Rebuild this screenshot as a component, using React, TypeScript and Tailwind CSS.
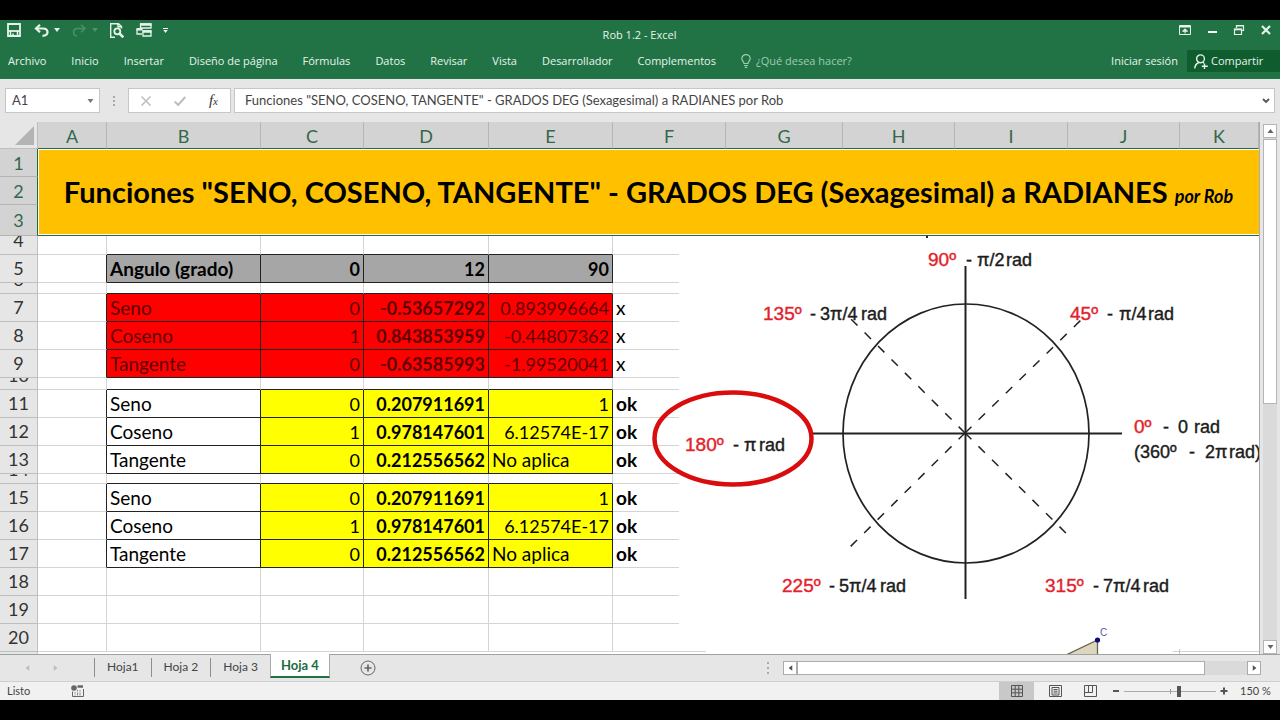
import type { ReactNode } from 'react';
import clsx from 'clsx';

type Kind = 'blank' | 'head' | 'bad' | 'good';

type Row = {
  n: number;
  kind: Kind;
  size?: 'row4' | 'thin' | 'thin10' | 'thin14';
  cells?: string[];
};

const columns = [
  { name: 'A', width: 'w-[69px]' },
  { name: 'B', width: 'w-[154px]' },
  { name: 'C', width: 'w-[103px]' },
  { name: 'D', width: 'w-[125px]' },
  { name: 'E', width: 'w-[124px]' },
  { name: 'F', width: 'w-[113px]' },
  { name: 'G', width: 'w-[117px]' },
  { name: 'H', width: 'w-[112px]' },
  { name: 'I', width: 'w-[113px]' },
  { name: 'J', width: 'w-[112px]' },
  { name: 'K', width: '' },
];

const rows: Row[] = [
  { n: 4, kind: 'blank', size: 'row4' },
  { n: 5, kind: 'head', cells: ['Angulo (grado)', '0', '12', '90', ''] },
  { n: 6, kind: 'blank', size: 'thin' },
  { n: 7, kind: 'bad', cells: ['Seno', '0', '-0.53657292', '0.893996664', 'x'] },
  { n: 8, kind: 'bad', cells: ['Coseno', '1', '0.843853959', '-0.44807362', 'x'] },
  { n: 9, kind: 'bad', cells: ['Tangente', '0', '-0.63585993', '-1.99520041', 'x'] },
  { n: 10, kind: 'blank', size: 'thin10' },
  { n: 11, kind: 'good', cells: ['Seno', '0', '0.207911691', '1', 'ok'] },
  { n: 12, kind: 'good', cells: ['Coseno', '1', '0.978147601', '6.12574E-17', 'ok'] },
  { n: 13, kind: 'good', cells: ['Tangente', '0', '0.212556562', 'No aplica', 'ok'] },
  { n: 14, kind: 'blank', size: 'thin14' },
  { n: 15, kind: 'good', cells: ['Seno', '0', '0.207911691', '1', 'ok'] },
  { n: 16, kind: 'good', cells: ['Coseno', '1', '0.978147601', '6.12574E-17', 'ok'] },
  { n: 17, kind: 'good', cells: ['Tangente', '0', '0.212556562', 'No aplica', 'ok'] },
  { n: 18, kind: 'blank' },
  { n: 19, kind: 'blank' },
  { n: 20, kind: 'blank' },
];

const heights = {
  row4: 'h-[19px]',
  thin: 'h-[11px]',
  thin10: 'h-[12px]',
  thin14: 'h-[10px]',
};

const innerHeights = {
  row4: 'h-[18px]',
  thin: 'h-[10px]',
  thin10: 'h-[11px]',
  thin14: 'h-[9px]',
};

const ribbonTabs = ['Inicio', 'Insertar', 'Diseño de página', 'Fórmulas', 'Datos', 'Revisar', 'Vista', 'Desarrollador', 'Complementos'];
const sheetTabs = ['Hoja1', 'Hoja 2', 'Hoja 3'];

function Caret({ className = 'h-[4px] w-[6px]' }: { className?: string }) {
  return (
    <svg viewBox="0 0 6 4" className={clsx('shrink-0', className)} fill="currentColor" aria-hidden="true">
      <path d="M0 0h6L3 4z" />
    </svg>
  );
}

function IconButton({ label, className, children }: { label: string; className?: string; children: ReactNode }) {
  return (
    <button type="button" aria-label={label} className={clsx('flex shrink-0 items-center justify-center', className)}>
      {children}
    </button>
  );
}

function TitleBar() {
  return (
    <div className="grid h-[30px] grid-cols-[1fr_auto_1fr] items-center pl-[7px] pr-2">
      <div className="flex h-5 items-center self-start">
        <IconButton label="Guardar" className="h-5 w-[14px]">
          <svg viewBox="0 0 14 14" className="size-[14px]" fill="none" stroke="currentColor" strokeWidth="1.8">
            <path d="M1 1h12v12H1z" />
            <path d="M1 8h12" />
            <path d="M3.500 8v5M10.500 8v5M6 10.500v2.500" strokeWidth="1.500" />
          </svg>
        </IconButton>
        <IconButton label="Deshacer" className="ml-[13px] h-5 w-[26px] gap-[5px]">
          <svg viewBox="0 0 15 13" className="h-[13px] w-[15px]" fill="none" stroke="currentColor" strokeWidth="2.200">
            <path d="M6 .8 2 4.5l4 3.8" />
            <path d="M2.4 4.5H9c3 0 4.500 1.500 4.500 3.600S12 11.800 8.500 11.800" />
          </svg>
          <Caret />
        </IconButton>
        <IconButton label="Rehacer" className="ml-3 h-5 w-[26px] gap-[5px] text-[#4d9069]">
          <svg viewBox="0 0 15 13" className="h-[13px] w-[15px]" fill="none" stroke="currentColor" strokeWidth="1.5">
            <path d="m9 .8 4 3.700-4 3.800" />
            <path d="M12.600 4.500H6C3 4.500 1.500 6 1.500 8.100S3 11.800 5 11.800" />
          </svg>
          <Caret />
        </IconButton>
        <IconButton label="Vista previa" className="ml-3 h-5 w-[14px]">
          <svg viewBox="0 0 14 15" className="h-[15px] w-[14px]" fill="none" stroke="currentColor" strokeWidth="1.4">
            <path d="M5 14.200H.700V.700h7.800L11.500 3.500v2M8 .800v3h3" />
            <circle cx="7.300" cy="8.300" r="3" strokeWidth="1.800" />
            <path d="m9.500 10.500 3.800 3.800" strokeWidth="2.600" />
          </svg>
        </IconButton>
        <IconButton label="Cambiar ventanas" className="ml-3 h-5 w-4">
          <svg viewBox="0 0 16 14" className="h-[14px] w-4" fill="none" stroke="currentColor" strokeWidth="1.3">
            <path d="M4.500 1h10.500v4H4.500zM1 6v5h5M7 8h8v5H7z" />
            <path d="M4 1.500h11.500M.500 6.200h6M6.500 8.500h9" strokeWidth="2.600" />
          </svg>
        </IconButton>
        <IconButton label="Personalizar barra" className="ml-[10px] h-5 w-[6px] flex-col gap-px">
          <span className="h-px w-[5px] bg-white" />
          <Caret className="h-[3px] w-[5px]" />
        </IconButton>
      </div>
      <h1 className="text-[11px] leading-4">Rob 1.2 - Excel</h1>
      <div className="flex h-5 items-center justify-end gap-[15px] self-start">
        <IconButton label="Opciones de la cinta" className="h-5 w-3">
          <svg viewBox="0 0 12 10" className="h-[10px] w-3" fill="none" stroke="currentColor">
            <path d="M.5.5h11v9H.5z" />
            <path d="M1 1.500h10" strokeWidth="2" />
            <path d="M6 8.500V4.500M3.500 6.200h5L6 3.800z" fill="currentColor" />
          </svg>
        </IconButton>
        <IconButton label="Minimizar" className="h-5 w-3">
          <span className="mt-1 h-[2px] w-[9px] bg-white" />
        </IconButton>
        <IconButton label="Restaurar" className="h-5 w-3">
          <svg viewBox="0 0 12 10" className="h-[10px] w-3" fill="none" stroke="currentColor">
            <path d="M3.500 3V.500h7v5H9M3.500 1h7M1.500 4h7v5.500h-7z" strokeWidth="1.200" />
            <path d="M1.500 4.500h7" strokeWidth="1.600" />
          </svg>
        </IconButton>
        <IconButton label="Cerrar" className="h-5 w-3">
          <svg viewBox="0 0 10 10" className="size-[10px]" stroke="currentColor" strokeWidth="2.200">
            <path d="m1 1 8 8M9 1 1 9" />
          </svg>
        </IconButton>
      </div>
    </div>
  );
}

function Ribbon() {
  return (
    <nav className="flex h-[29px] items-start text-[11px] leading-[22px] whitespace-nowrap">
      <button type="button" className="ml-2">Archivo</button>
      <div className="ml-[25px] flex gap-[25px]">
        {ribbonTabs.map((tab) => (
          <button type="button" key={tab}>{tab}</button>
        ))}
      </div>
      <label className="ml-[25px] flex h-[22px] items-center gap-[5px] text-[#9fcbb0]">
        <svg viewBox="0 0 10 14" className="h-[14px] w-[10px]" fill="none" stroke="currentColor" strokeWidth="1.200">
          <path d="M3 9.500C3 7.500.8 7 .8 4.600a4.200 4 0 0 1 8.400 0C9.200 7 7 7.500 7 9.500zM3 11.500h4M3.800 13.300h2.400" />
        </svg>
        <input
          type="text"
          aria-label="¿Qué desea hacer?"
          placeholder="¿Qué desea hacer?"
          className="w-[110px] bg-transparent outline-none placeholder:text-[#9fcbb0]"
        />
      </label>
      <button type="button" className="ml-auto">Iniciar sesión</button>
      <button type="button" className="ml-[9px] flex h-[22px] w-[93px] items-center gap-[3px] bg-[#0f5c2f] pl-[7px]">
        <svg viewBox="0 0 14 15" className="h-[15px] w-[14px]" fill="none" stroke="currentColor" strokeWidth="1.400">
          <circle cx="6.500" cy="4.800" r="3.900" />
          <path d="M.700 14.500C1 11.500 2.500 9.300 5 8.500M8.500 8l1.500 1.200M10.500 9.500v5.500M7.800 12.200h6" />
        </svg>
        Compartir
      </button>
    </nav>
  );
}

function FormulaBar() {
  return (
    <div className="flex h-[43px] items-start bg-[#e6e6e6] pt-[9px] pr-[5px] pl-[5px] text-[13px] text-[#444]">
      <label className="flex h-[25px] w-[95px] items-center border border-[#c6c6c6] bg-white pr-[5px] pl-[6px]">
        <input aria-label="Cuadro de nombres" defaultValue="A1" className="min-w-0 flex-1 outline-none" />
        <Caret className="h-[4px] w-[7px] text-[#777]" />
      </label>
      <span className="flex h-[25px] w-7 flex-col items-center justify-center gap-[2px]">
        <i className="size-[2px] bg-[#aaa]" />
        <i className="size-[2px] bg-[#aaa]" />
        <i className="size-[2px] bg-[#aaa]" />
      </span>
      <div className="flex h-[25px] w-[103px] items-center justify-between border border-[#c6c6c6] bg-white pr-3 pl-3">
        <IconButton label="Cancelar">
          <svg viewBox="0 0 10 10" className="size-[10px]" stroke="#bdbdbd" strokeWidth="1.500">
            <path d="m.500.500 9 9M9.500.500l-9 9" />
          </svg>
        </IconButton>
        <IconButton label="Introducir">
          <svg viewBox="0 0 12 10" className="h-[10px] w-3" stroke="#bdbdbd" strokeWidth="2" fill="none">
            <path d="m.700 5.500 3.500 3.500 7-8" />
          </svg>
        </IconButton>
        <button type="button" aria-label="Insertar función" className="font-['Liberation_Serif',serif] text-[15px] leading-5 text-[#333] italic">
          f<span className="text-[11px]">x</span>
        </button>
      </div>
      <label className="ml-[3px] flex h-[25px] min-w-0 flex-1 items-center border border-[#c6c6c6] bg-white pr-1 pl-[10px]">
        <input
          aria-label="Barra de fórmulas"
          defaultValue={'Funciones "SENO, COSENO, TANGENTE" - GRADOS DEG (Sexagesimal) a RADIANES por Rob'}
          className="min-w-0 flex-1 outline-none"
        />
        <svg viewBox="0 0 8 6" className="h-[6px] w-2" fill="none" stroke="#555" strokeWidth="1.800">
          <path d="m1 1 3 3 3-3" />
        </svg>
      </label>
    </div>
  );
}

const fills = {
  blank: '',
  head: 'bg-[#a6a6a6] font-bold',
  bad: 'bg-[#ff0000] text-[#5e0000]',
  good: 'bg-[#ffff00]',
};

function DataRow({ row, next }: { row: Row; next?: Row }) {
  const filled = row.kind !== 'blank';
  const opensBlock = !filled && next !== undefined && next.kind !== 'blank';

  return (
    <tr className={row.size ? heights[row.size] : 'h-[28px]'}>
      <th scope="row" className="border-r border-b border-[#bfbfbf] bg-[#e6e6e6] p-0 font-normal text-[#333]">
        <div className={clsx('flex items-end justify-center overflow-hidden', row.size ? innerHeights[row.size] : 'h-[27px]')}>
          <span className="mb-1 leading-5">{row.n}</span>
        </div>
      </th>
      {columns.map((col, i) => {
        const inBlock = i >= 1 && i <= 4;
        const text = row.cells?.[i - 1] ?? '';
        const left = i === 1 || i === 5 || text === 'No aplica';
        return (
          <td
            key={col.name}
            className={clsx(
              'border-r border-b p-0 px-[3px] whitespace-nowrap',
              row.size ? 'leading-none' : 'leading-5',
              left ? 'text-left text-[19px]' : 'text-right',
              filled && i <= 4 ? 'border-r-[#222]' : 'border-r-[#d4d4d4]',
              inBlock && (filled || opensBlock) ? 'border-b-[#222]' : 'border-b-[#d4d4d4]',
              inBlock && !(row.kind === 'good' && i === 1) && fills[row.kind],
              (i === 3 || (i === 5 && row.kind === 'good')) && 'font-bold',
            )}
          >
            {text}
          </td>
        );
      })}
    </tr>
  );
}

// Coordinates are those of the sheet, so the figure keeps its place over the cells.
function CircleFigure() {
  const labels = [
    { x: 928, y: 266, deg: '90º', parts: [[966, '-'], [977, 'π/2'], [1006, 'rad']] },
    { x: 763, y: 320, deg: '135º', parts: [[810, '-'], [820, '3π/4'], [861, 'rad']] },
    { x: 1070, y: 320, deg: '45º', parts: [[1107, '-'], [1119, 'π/4'], [1148, 'rad']] },
    { x: 685, y: 451, deg: '180º', parts: [[733, '-'], [744, 'π'], [759, 'rad']] },
    { x: 1134, y: 433, deg: '0º', parts: [[1163, '-'], [1178, '0'], [1194, 'rad']] },
    { x: 1134, y: 458, deg: '', parts: [[1134, '(360º'], [1189, '-'], [1205, '2π'], [1229, 'rad)']] },
    { x: 782, y: 592, deg: '225º', parts: [[829, '-'], [839, '5π/4'], [880, 'rad']] },
    { x: 1045, y: 592, deg: '315º', parts: [[1093, '-'], [1103, '7π/4'], [1143, 'rad']] },
  ] as const;

  return (
    <svg
      viewBox="650 236 610 418"
      className="absolute top-[114px] left-[650px] h-[418px] w-[610px] font-['Liberation_Sans',Arial,sans-serif] text-[18px]"
      role="img"
      aria-label="Circunferencia con grados y radianes"
    >
      <path d="M679 236h581v415H1173v3H706v-3h-27z" fill="#fff" />
      <path d="M927 236v2" stroke="#222" strokeWidth="2" />
      <g fill="none" stroke="#222">
        <ellipse cx="966" cy="433.500" rx="123" ry="129.500" strokeWidth="1.700" />
        <path d="M965.500 266v333M812 433.500h310" strokeWidth="2" />
        <path d="M965 433 850 318M965 433 1082 319M965 433 850 547M965 433l108 107" strokeWidth="1.500" strokeDasharray="9 10" />
      </g>
      {labels.map((label) => (
        <text key={label.y + label.x} y={label.y} fill="#1c1c1c" stroke="#1c1c1c" strokeWidth="0.4">
          {label.deg && <tspan x={label.x} className="text-[19px]" fill="#e3222b" stroke="#e3222b">{label.deg}</tspan>}
          {label.parts.map(([x, part]) => (
            <tspan key={x} x={x}>{part}</tspan>
          ))}
        </text>
      ))}
      <ellipse cx="733" cy="438.500" rx="78.500" ry="46" fill="none" stroke="#d90d0d" strokeWidth="4.500" />
      <path d="m1066 655 31.500-15v15z" fill="#ddd6bf" stroke="#6b6248" strokeWidth="1.300" />
      <circle cx="1097.500" cy="640" r="2.600" fill="#0a0a8a" />
      <text x="1100" y="636" className="text-[10px]" fill="#5656a8">C</text>
      <path d="M1179.500 649v5" stroke="#c8c8c8" />
    </svg>
  );
}

function Sheet() {
  return (
    <div className="flex bg-[#e6e6e6]">
      <div className="relative min-w-0 flex-1 overflow-hidden border-r border-[#ababab] bg-white">
        <table className="w-full table-fixed border-separate border-spacing-0 text-[18px] text-black">
          <colgroup>
            <col className="w-[38px]" />
            {columns.map((col) => (
              <col key={col.name} className={col.width} />
            ))}
          </colgroup>
          <thead>
            <tr className="h-[27px]">
              <th className="border-r border-b border-[#bfbfbf] bg-[#e6e6e6] p-0 pr-[3px]">
                <svg viewBox="0 0 19 19" className="ml-auto size-[19px]" fill="#b4b4b4" aria-hidden="true">
                  <path d="M19 0v19H0z" />
                </svg>
              </th>
              {columns.map((col) => (
                <th
                  key={col.name}
                  scope="col"
                  className="border-r border-b border-r-[#b5b5b5] border-b-[#1e6b3f] bg-[#d3d3d3] p-0 pt-[2px] leading-5 font-normal text-[#33684a]"
                >
                  {col.name}
                </th>
              ))}
            </tr>
          </thead>
          <tbody>
            {[1, 2, 3].map((n) => (
              <tr key={n} className={n === 3 ? 'h-[31px]' : 'h-[28px]'}>
                <th
                  scope="row"
                  className="border-r border-b border-r-[#1e6b3f] border-b-[#b5b5b5] bg-[#d3d3d3] p-0 leading-5 font-normal text-[#33684a]"
                >
                  {n}
                </th>
                {n === 1 && (
                  <td
                    rowSpan={3}
                    colSpan={11}
                    className="border-b border-[#1e6b3f] bg-[#ffc000] p-0 pt-[3px] text-center text-[29px] leading-8 font-bold whitespace-nowrap shadow-[inset_1px_1px_0_#fff,inset_0_-1px_0_#fff]"
                  >
                    Funciones "SENO, COSENO, TANGENTE" - GRADOS DEG (Sexagesimal) a RADIANES{' '}
                    <i className="text-[18px]">por Rob</i>
                  </td>
                )}
              </tr>
            ))}
            {rows.map((row, i) => (
              <DataRow key={row.n} row={row} next={rows[i + 1]} />
            ))}
            <tr className="h-[2px]">
              <th className="border-r border-[#bfbfbf] bg-[#e6e6e6] p-0" />
              <td colSpan={11} className="p-0" />
            </tr>
          </tbody>
        </table>
        <CircleFigure />
      </div>
      <div className="flex w-5 flex-col items-center pt-[2px]">
        <IconButton label="Subir" className="h-[14px] w-[14px] border border-[#b5b5b5] bg-white text-[#666]">
          <Caret className="h-[4px] w-[7px] rotate-180" />
        </IconButton>
        <div className="flex w-[14px] flex-1 flex-col bg-[#dadada]">
          <div className="mt-px h-[265px] border border-[#b5b5b5] bg-white" />
        </div>
        <IconButton label="Bajar" className="h-[14px] w-[14px] border border-[#b5b5b5] bg-white text-[#666]">
          <Caret className="h-[4px] w-[7px]" />
        </IconButton>
      </div>
    </div>
  );
}

function SheetTabs() {
  return (
    <div className="flex h-[27px] border-t border-[#9aa59d] bg-[#e6e6e6] text-[12px] leading-[23px] text-[#444]">
      <div className="flex w-[94px] items-center gap-[21px] pl-6 text-[#bcbcbc]">
        <IconButton label="Hoja anterior">
          <Caret className="h-[4px] w-[7px] rotate-90" />
        </IconButton>
        <IconButton label="Hoja siguiente">
          <Caret className="h-[4px] w-[7px] -rotate-90" />
        </IconButton>
      </div>
      {sheetTabs.map((tab) => (
        <div key={tab} className="flex items-start">
          <span className="mt-[3px] h-[19px] w-px bg-[#8e8e8e]" />
          <button type="button" className="px-3">{tab}</button>
        </div>
      ))}
      <button type="button" className="-mt-px h-[24px] w-[60px] border-x border-b-2 border-x-[#ababab] border-b-[#217346] bg-white text-[13px] font-bold text-[#1c6b3e]">
        Hoja 4
      </button>
      <IconButton label="Hoja nueva" className="ml-[30px]">
        <svg viewBox="0 0 16 16" className="size-4" fill="none" stroke="#666">
          <circle cx="8" cy="8" r="7" />
          <path d="M8 4.500v7M4.500 8h7" strokeWidth="1.700" />
        </svg>
      </IconButton>
      <div className="ml-auto flex w-[513px] items-center">
        <span className="mr-[14px] flex flex-col gap-[3px]">
          <i className="size-[2px] bg-[#aaa]" />
          <i className="size-[2px] bg-[#aaa]" />
          <i className="size-[2px] bg-[#aaa]" />
        </span>
        <IconButton label="Desplazar a la izquierda" className="size-[14px] border border-[#ababab] bg-white text-[#555]">
          <Caret className="h-[4px] w-[7px] rotate-90" />
        </IconButton>
        <div className="h-[14px] w-[450px] bg-[#dadada]">
          <div className="h-[14px] w-[408px] border border-[#ababab] bg-white" />
        </div>
        <IconButton label="Desplazar a la derecha" className="size-[14px] border border-[#ababab] bg-white text-[#555]">
          <Caret className="h-[4px] w-[7px] -rotate-90" />
        </IconButton>
      </div>
    </div>
  );
}

function StatusBar() {
  return (
    <footer className="flex h-[19px] items-center border-t border-[#cfcfcf] bg-[#f1f1f1] text-[11px] text-[#444]">
      <span className="w-16 pl-[7px]">Listo</span>
      <IconButton label="Grabar macro" className="ml-[7px]">
        <svg viewBox="0 0 13 12" className="h-3 w-[13px]" fill="none" stroke="#666">
          <circle cx="3" cy="3" r="2.800" fill="#666" stroke="none" />
          <path d="M6.500 1.500H12" strokeWidth="2.500" />
          <path d="M1.500 6.500v5h11V4" />
          <path d="M4 7v1.500M6.500 5v1.500M9 5v1.500M4 9.500v1M6.500 7.500v3M9 7.500v3" stroke="#888" />
        </svg>
      </IconButton>
      <div className="ml-auto flex h-full items-center">
        <IconButton label="Normal" className="h-full w-[35px] bg-[#c8c8c8]">
          <svg viewBox="0 0 12 12" className="size-3" fill="none" stroke="#555">
            <path d="M.5.5h11v11H.5zM4.200.500v11M7.800.500v11M.500 4.200h11M.500 7.800h11" />
          </svg>
        </IconButton>
        <IconButton label="Diseño de página" className="ml-1 h-full w-[35px]">
          <svg viewBox="0 0 13 12" className="h-3 w-[13px]" fill="none" stroke="#555">
            <path d="M.5.5h12v11H.5zM3 2.500h7v7.500H3zM4.500 4.500h4M4.500 6.200h4M4.500 8h4" />
          </svg>
        </IconButton>
        <IconButton label="Salto de página" className="h-full w-[35px]">
          <svg viewBox="0 0 13 12" className="h-3 w-[13px]" fill="none" stroke="#555">
            <path d="M.5.5h12v11H.5zM4.500.500v7M8.500.500v7M1 7.500h7.500" />
          </svg>
        </IconButton>
        <IconButton label="Alejar" className="h-full w-4">
          <span className="h-[2px] w-[6px] bg-[#555]" />
        </IconButton>
        <div className="relative flex w-[92px] items-center">
          <span className="absolute left-[46px] h-[5px] w-px bg-[#999]" />
          <input
            type="range"
            aria-label="Zoom"
            defaultValue={60}
            className="h-[11px] w-full appearance-none bg-[linear-gradient(#aaa,#aaa)] bg-[length:100%_1px] bg-center bg-no-repeat [&::-webkit-slider-thumb]:h-[11px] [&::-webkit-slider-thumb]:w-[4px] [&::-webkit-slider-thumb]:appearance-none [&::-webkit-slider-thumb]:bg-[#555]"
          />
        </div>
        <IconButton label="Acercar" className="h-full w-4">
          <svg viewBox="0 0 8 8" className="size-2" stroke="#555" strokeWidth="2">
            <path d="M4 .500v7M.500 4h7" />
          </svg>
        </IconButton>
        <span className="w-12 pl-2 whitespace-nowrap">150 %</span>
      </div>
    </footer>
  );
}

export default function App() {
  return (
    <div className="overflow-hidden bg-black py-5 font-[Lato,Carlito,sans-serif]">
      <header className="bg-[#217346] font-['Open_Sans','Noto_Sans',sans-serif] text-[#e6f3ea]">
        <TitleBar />
        <Ribbon />
      </header>
      <main>
        <FormulaBar />
        <Sheet />
        <SheetTabs />
      </main>
      <StatusBar />
    </div>
  );
}
